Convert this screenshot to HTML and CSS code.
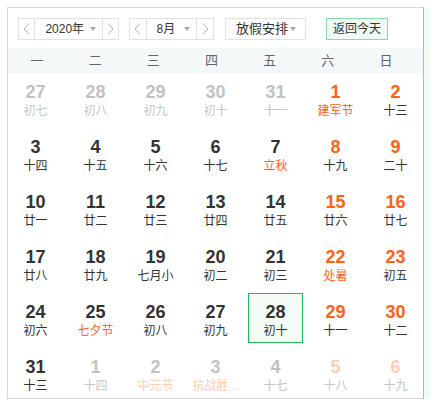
FILE: index.html
```html
<!DOCTYPE html>
<html lang="zh-CN">
<head>
<meta charset="utf-8">
<title>日历</title>
<link rel="stylesheet" href="styles.css">
</head>
<body>
<div class="widget">
  <div class="cal">
    <div class="toolbar">
      <div class="select year">
        <span class="arrow"><svg width="7" height="12" viewBox="0 0 7 12"><polyline points="6,0.5 1,6 6,11.5" fill="none" stroke="#b5b5b5" stroke-width="1"/></svg></span>
        <span class="value"><span>2020年</span><i class="caret"></i></span>
        <span class="arrow"><svg width="7" height="12" viewBox="0 0 7 12"><polyline points="1,0.5 6,6 1,11.5" fill="none" stroke="#b5b5b5" stroke-width="1"/></svg></span>
      </div>
      <div class="select month">
        <span class="arrow"><svg width="7" height="12" viewBox="0 0 7 12"><polyline points="6,0.5 1,6 6,11.5" fill="none" stroke="#b5b5b5" stroke-width="1"/></svg></span>
        <span class="value"><span>8月</span><i class="caret"></i></span>
        <span class="arrow"><svg width="7" height="12" viewBox="0 0 7 12"><polyline points="1,0.5 6,6 1,11.5" fill="none" stroke="#b5b5b5" stroke-width="1"/></svg></span>
      </div>
      <div class="select holiday">
        <span class="value"><span>放假安排</span><i class="caret"></i></span>
      </div>
      <div class="today-btn">返回今天</div>
    </div>
    <div class="weekdays">
      <span>一</span><span>二</span><span>三</span><span>四</span><span>五</span><span>六</span><span>日</span>
    </div>
    <div class="days">
      <div class="day other"><b>27</b><span>初七</span></div>
      <div class="day other"><b>28</b><span>初八</span></div>
      <div class="day other"><b>29</b><span>初九</span></div>
      <div class="day other"><b>30</b><span>初十</span></div>
      <div class="day other"><b>31</b><span>十一</span></div>
      <div class="day weekend festival"><b>1</b><span>建军节</span></div>
      <div class="day weekend"><b>2</b><span>十三</span></div>

      <div class="day"><b>3</b><span>十四</span></div>
      <div class="day"><b>4</b><span>十五</span></div>
      <div class="day"><b>5</b><span>十六</span></div>
      <div class="day"><b>6</b><span>十七</span></div>
      <div class="day festival"><b>7</b><span>立秋</span></div>
      <div class="day weekend"><b>8</b><span>十九</span></div>
      <div class="day weekend"><b>9</b><span>二十</span></div>

      <div class="day"><b>10</b><span>廿一</span></div>
      <div class="day"><b>11</b><span>廿二</span></div>
      <div class="day"><b>12</b><span>廿三</span></div>
      <div class="day"><b>13</b><span>廿四</span></div>
      <div class="day"><b>14</b><span>廿五</span></div>
      <div class="day weekend"><b>15</b><span>廿六</span></div>
      <div class="day weekend"><b>16</b><span>廿七</span></div>

      <div class="day"><b>17</b><span>廿八</span></div>
      <div class="day"><b>18</b><span>廿九</span></div>
      <div class="day"><b>19</b><span>七月小</span></div>
      <div class="day"><b>20</b><span>初二</span></div>
      <div class="day"><b>21</b><span>初三</span></div>
      <div class="day weekend festival"><b>22</b><span>处暑</span></div>
      <div class="day weekend"><b>23</b><span>初五</span></div>

      <div class="day"><b>24</b><span>初六</span></div>
      <div class="day festival"><b>25</b><span>七夕节</span></div>
      <div class="day"><b>26</b><span>初八</span></div>
      <div class="day"><b>27</b><span>初九</span></div>
      <div class="day selected"><b>28</b><span>初十</span></div>
      <div class="day weekend"><b>29</b><span>十一</span></div>
      <div class="day weekend"><b>30</b><span>十二</span></div>

      <div class="day"><b>31</b><span>十三</span></div>
      <div class="day other"><b>1</b><span>十四</span></div>
      <div class="day other festival"><b>2</b><span>中元节</span></div>
      <div class="day other festival"><b>3</b><span title="抗战胜利纪念日">抗战胜...</span></div>
      <div class="day other"><b>4</b><span>十七</span></div>
      <div class="day other weekend"><b>5</b><span>十八</span></div>
      <div class="day other weekend"><b>6</b><span>十九</span></div>
    </div>
  </div>
  <div class="detail"></div>
</div>
</body>
</html>
```
FILE: styles.css
```css
html, body {
  margin: 0;
  padding: 0;
  background: #fff;
  overflow: hidden;
}
body {
  padding: 7px 0 0 7px;
  font-family: "Liberation Sans", "Noto Sans CJK SC", sans-serif;
  color: #333;
}
.widget {
  display: flex;
  width: 424px;
}
.cal {
  width: 415px;
  height: 390px;
  border: 1px solid #d7d7d7;
  border-right: none;
  flex: none;
}
.detail {
  flex: 1;
  height: 392px;
  box-sizing: border-box;
  border-left: 1px solid #7fd7a2;
  background: #f2fcf5;
}
.toolbar {
  display: flex;
  align-items: center;
  height: 40px;
  padding: 10px 0 8px 10px;
  box-sizing: border-box;
}
.select {
  display: flex;
  height: 22px;
  box-sizing: border-box;
  border: 1px solid #e2e2e2;
  background: #fff;
  font-size: 12px;
  line-height: 20px;
}
.arrow {
  width: 16px;
  display: flex;
  align-items: center;
  justify-content: center;
}
.arrow svg { display: block; }
.arrow:first-child { border-right: 1px solid #e2e2e2; }
.arrow:last-child { border-left: 1px solid #e2e2e2; }
.value {
  display: flex;
  align-items: center;
  justify-content: space-between;
  padding: 0 6px 0 10px;
}
.year .value { width: 68px; box-sizing: border-box; }
.year { width: 101px; }
.month { margin-left: 10px; width: 85px; }
.month .value { width: 51px; box-sizing: border-box; }
.holiday { margin-left: 11px; width: 81px; font-size: 13px; }
.holiday .value { width: 100%; padding: 0 9px 0 10px; }
.caret {
  display: block;
  width: 0;
  height: 0;
  border-left: 3px solid transparent;
  border-right: 3px solid transparent;
  border-top: 4px solid #a6a6a6;
}
.today-btn {
  margin-left: 20px;
  width: 62px;
  height: 22px;
  box-sizing: border-box;
  border: 1px solid #88dca9;
  background: #f0fbf4;
  font-size: 12px;
  line-height: 20px;
  text-align: center;
  color: #333;
}
.weekdays {
  display: grid;
  grid-template-columns: repeat(7, 58.15px);
  height: 25px;
  background: #f4f8f9;
  font-size: 13px;
  line-height: 25px;
  color: #666;
  text-align: center;
}
.days {
  display: grid;
  grid-template-columns: repeat(7, 55px);
  grid-auto-rows: 50px;
  column-gap: 5px;
  row-gap: 5px;
}
.day {
  box-sizing: border-box;
  border: 1px solid transparent;
  padding-top: 8px;
  text-align: center;
  overflow: hidden;
}
.day b {
  display: block;
  font-size: 18px;
  line-height: 20px;
  font-weight: bold;
  color: #333;
}
.day span {
  display: block;
  font-size: 12px;
  line-height: 18px;
  color: #333;
  white-space: nowrap;
}
.day.weekend b { color: #ff6213; }
.day.festival span { color: #ff6213; }
.day.other b { color: #c2c2c2; }
.day.other span { color: #c6c6c6; }
.day.other.weekend b { color: #fdcdb1; }
.day.other.festival span { color: #fdcdb1; }
.day.selected {
  border-color: #1dbb58;
  background: #f3fdf6;
}
```
